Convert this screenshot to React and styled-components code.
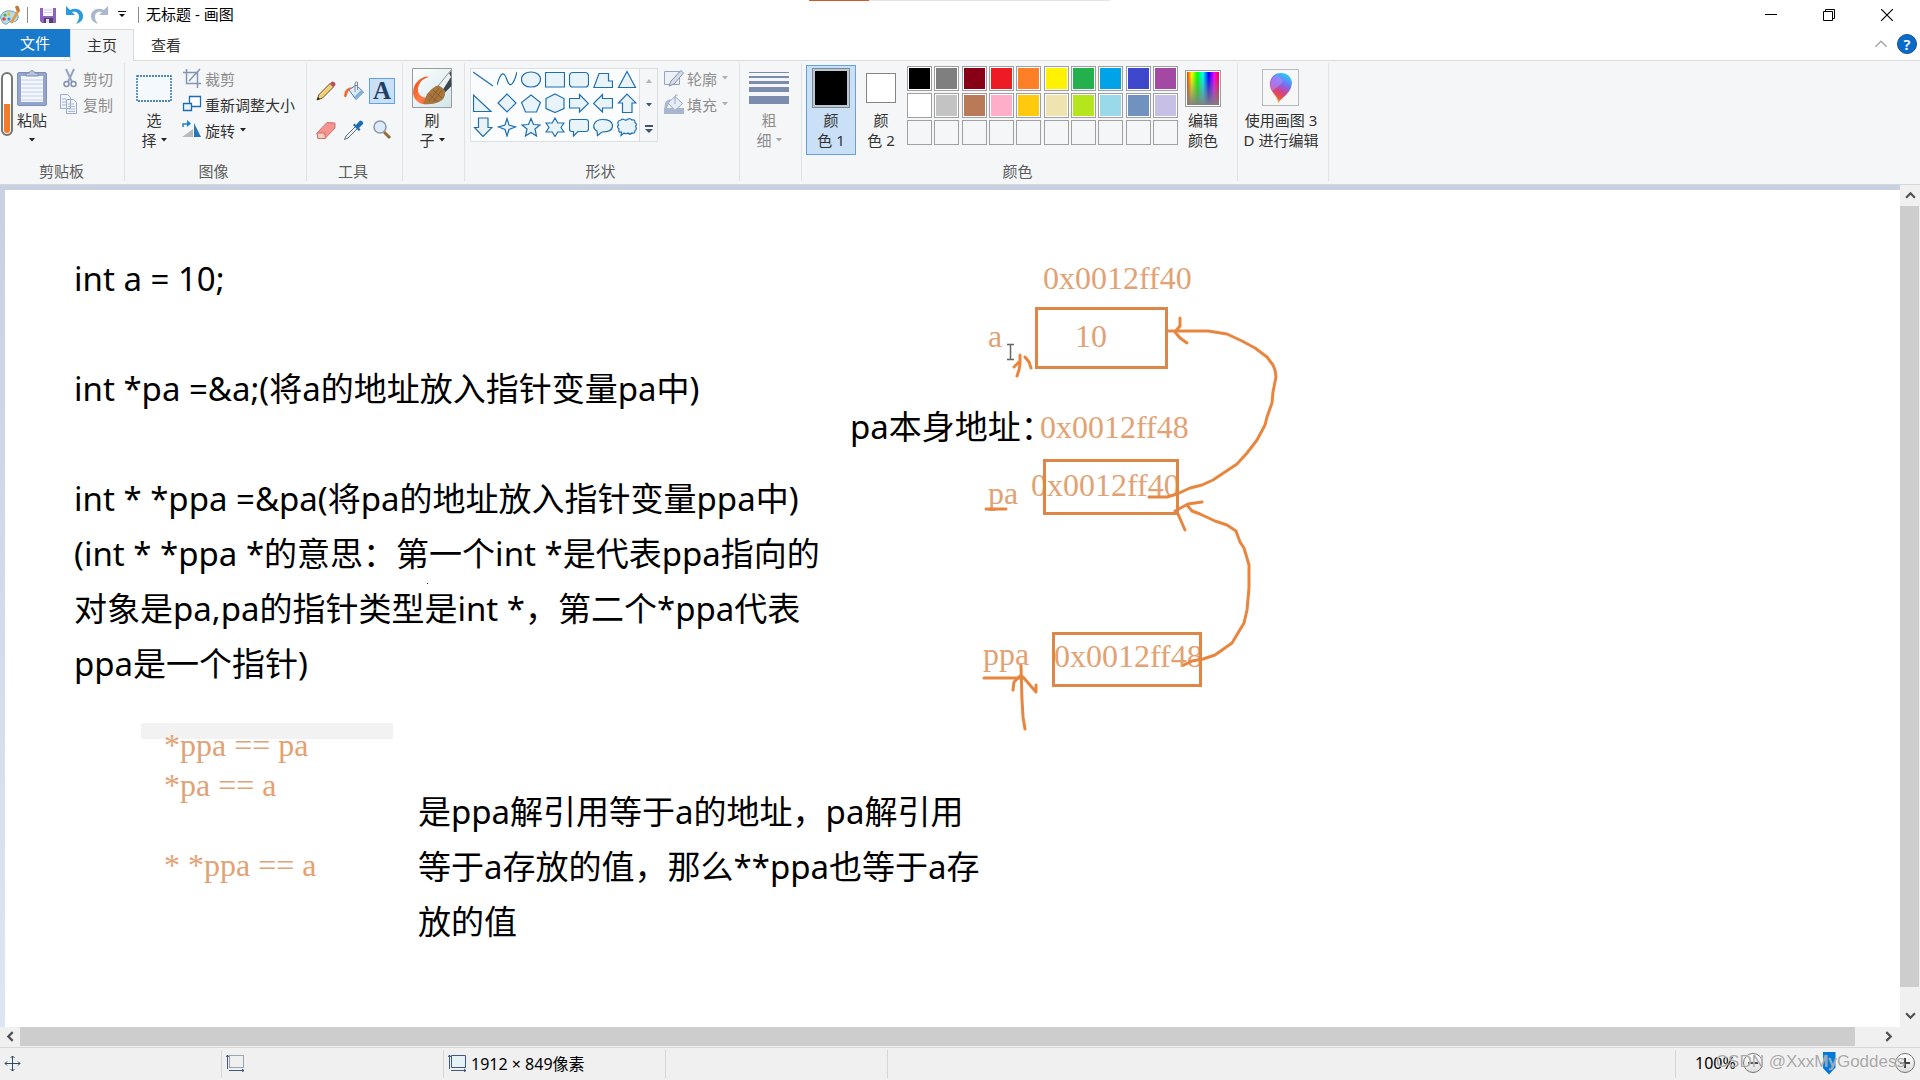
import React from "react";
import styled, { createGlobalStyle } from "styled-components";

const GlobalStyle = createGlobalStyle`
  * {
    box-sizing: border-box;
  }
  body {
    margin: 0;
    overflow: hidden;
    background: #fff;
  }
  body, button, input {
    font-family: "Noto Sans", "Noto Sans CJK SC", sans-serif;
    font-size: 15px;
  }
  button {
    margin: 0;
    padding: 0;
    border: 0;
    background: none;
    color: inherit;
  }
  svg {
    display: block;
    flex: none;
  }
`;

const PALETTE = [
  "#000000", "#7f7f7f", "#880015", "#ed1c24", "#ff7f27", "#fff200", "#22b14c", "#00a2e8", "#3f48cc", "#a349a4",
  "#ffffff", "#c3c3c3", "#b97a57", "#ffaec9", "#ffc90e", "#efe4b0", "#b5e61d", "#99d9ea", "#7092be", "#c8bfe7",
  "", "", "", "", "", "", "", "", "", "",
];

const SHAPES = [
  ["直线", "M0 3 20 17"],
  ["曲线", "M0 16C4 2 7 2 10 11C13 20 17 15 20 3"],
  ["椭圆形", "M10 3C15.500 3 19.500 6 19.500 10.500S15.500 18 10 18 .5 15 .5 10.500 4.500 3 10 3z"],
  ["矩形", "M.5 3.500h19v14.500H.5z"],
  ["圆角矩形", "M4 3.500h12q3.500 0 3.500 3.500v7.500q0 3.500-3.500 3.500H4Q.5 18 .5 14.500V7Q.5 3.500 4 3.500z"],
  ["多边形", "M6 4.500h9.500v7.500h4v6.500H.8z"],
  ["三角形", "M10 2.500 18.500 18.500h-17z"],
  ["直角三角形", "M.5 2v16.500H18z"],
  ["菱形", "M10 1 19 10 10 19 1 10z"],
  ["五边形", "M10 2 19.500 9.500 15.500 19h-11L.5 9.500z"],
  ["六边形", "M10 1 19 5.500v10L10 19.500 1 15.500v-10z"],
  ["右箭头", "M.5 5.500h10V1.500L19.500 10.500l-9 8.500v-4H.5z"],
  ["左箭头", "M19.500 5.500h-10V1.500L.5 10.500l9 8.500v-4h10z"],
  ["向上箭头", "M5.500 19.500v-9.500H1.500L10 1l9 9h-4v9.500z"],
  ["向下箭头", "M5.500 1v9.500H1.500L10 19.500l9-9h-4V1z"],
  ["四角星形", "M10 1.500 12 8 18.500 10 12 12.500 10 19 8 12.500 1.500 10 8 8z"],
  ["五角星形", "M10 1.500 12.500 7.500 19 8 14 12 15.500 19 10 15.500 4.500 19 6 12 1 8 7.500 7.500z"],
  ["六角星形", "M10 1 12.800 6H19l-3 4.500 3 4.500h-6.200L10 19.500 7.200 15H1l3-4.500L1 6h6.200z"],
  ["圆角矩形标注", "M3 2.500h14q2.500 0 2.500 2.500v7q0 2.500-2.500 2.500H9L4.500 19V14.500H3Q.5 14.500.5 12V5Q.5 2.500 3 2.500z"],
  ["椭圆形标注", "M10 2.500C16 2.500 19.500 5 19.500 9S16 15 9 15L4.500 18.500 4 14C-1.500 11 0 2.500 10 2.500z"],
  ["云形标注", "M4 3Q5 1.500 7 2.500 9 4 11 2 13 1 15 3 18 2 18 5.500 20.500 7 18.500 9.500 20.500 12 18 13.500 18 17 15 16 13 18 11 16 9 17.500 7 16L4 18.500 4.500 15Q1 16 2 12-.5 10 1.500 8-.5 4 4 3z"],
];

const STROKES = [
  // pa -> a
  "M1149 497 1167 497 1177 494 1190 488 1202 485 1213 480 1228 470 1237 464 1247 453 1257 440 1265 425 1267 417 1272 403 1273 392 1276 377 1275 370 1273 365 1267 357 1255 348 1242 341 1227 334 1208 331 1168 331",
  "M1180 318 1180 326 1175 332 1180 338 1187 343",
  // ppa -> pa
  "M1184 665 1192 661 1203 659 1215 655 1232 643 1244 623 1247 610 1249 588 1249 565 1244 548 1240 542 1236 531 1227 525 1215 521 1200 514 1192 511 1187 505",
  "M1202 502 1188 504 1175 511 1178 514 1185 530",
  "M1020 355 1020 364 1019 370 1017 376M1014 367 1019 362M1025 357 1029 362 1031 368",
  "M986 509 1006 509M984 678 1022 678",
  "M1021 666 1022 700 1023 717 1025 729",
  "M1013 690 1014 682 1020 676 1023 677 1036 692 1036 685",
];

const NOTE_A = [
  "int a = 10;",
  "",
  "int *pa =&a;(将a的地址放入指针变量pa中)",
  "",
  "int * *ppa =&pa(将pa的地址放入指针变量ppa中)",
  "(int * *ppa *的意思：第一个int *是代表ppa指向的",
  "对象是pa,pa的指针类型是int *，第二个*ppa代表",
  "ppa是一个指针)",
].join("\n");

const NOTE_B = "是ppa解引用等于a的地址，pa解引用\n等于a存放的值，那么**ppa也等于a存\n放的值";

const Caret = ({ color = "#222" }) => (
  <svg width="6" height="4">
    <path d="M0 0h6L3 3.500z" fill={color} />
  </svg>
);

const Icon = ({ size = 20, children }) => (
  <svg width={size} height={size} viewBox="0 0 20 20" fill="none">
    {children}
  </svg>
);

const PaintIcon = () => (
  <Icon>
    <path d="M1 14C-1 9 5 5 11 6s9 5 6 9-7 0-9 3-6 0-7-4z" fill="#b9dcea" stroke="#6f9db3" />
    <circle cx="4" cy="14" r="1.800" fill="#dc4a39" />
    <circle cx="5" cy="10" r="1.600" fill="#56ad47" />
    <circle cx="9" cy="9" r="1.600" fill="#f0b429" />
    <circle cx="9" cy="14" r="1.500" fill="#4687cf" />
    <path d="M19 5 11 18" stroke="#e39a3b" strokeWidth="2.500" />
    <path d="M15 2q2-3 4 0l1 4-3 1z" fill="#b97a43" />
  </Icon>
);

const SaveIcon = () => (
  <Icon>
    <path d="M2 3h16v15H4l-2-2z" fill="#8b62bd" />
    <path d="M5 3h10v8H5z" fill="#f6f5fa" />
    <path d="M6 5h8M6 7.500h8" stroke="#d2d2e2" />
    <path d="M6 13h9v5H6z" fill="#52416d" />
    <path d="M8 14h3v4H8z" fill="#e5e0ee" />
  </Icon>
);

const UndoIcon = ({ color, flip }) => (
  <Icon>
    <g transform={flip ? "translate(20 0) scale(-1 1)" : undefined} fill={color}>
      <path d="M2 1v9h9L8 7c4-1 7 1 7 5 0 2-1 4-3 7 5-2 7-4 7-8 0-6-7-9-13-6z" />
    </g>
  </Icon>
);

const PasteIcon = () => (
  <svg width="32" height="38" viewBox="0 0 32 38">
    <rect x="1.500" y="3.500" width="29" height="33" rx="1.500" fill="#93a5cb" stroke="#7e90b8" />
    <path d="M5 7h22v26H5z" fill="#f3f7fd" />
    <path d="M5 11h22M5 15h22M5 19h22M5 23h22M5 27h22M5 31h22" stroke="#c3d0e7" />
    <path d="M10 7V4h3q3-5 6 0h3v3z" fill="#b8c3d8" stroke="#7e90b8" />
  </svg>
);

const CutIcon = () => (
  <Icon>
    <path d="M6 1l6 13M14 1 8 14" stroke="#97a5bf" strokeWidth="2" />
    <circle cx="6.500" cy="16" r="2.500" stroke="#8191b0" strokeWidth="1.500" />
    <circle cx="13.500" cy="16" r="2.500" stroke="#8191b0" strokeWidth="1.500" />
  </Icon>
);

const CopyIcon = () => (
  <Icon>
    <path d="M.5.500h7l3 3v11H.5zM6.500 5.500h7l3 3v11h-10z" fill="#f2f6fc" stroke="#9babc9" />
    <path d="M2 5h4M2 8h4M2 11h4M8 10h6M8 12.500h7M8 15h7M8 17.500h7" stroke="#a9b8d3" />
  </Icon>
);

const CropIcon = () => (
  <Icon>
    <path d="M1 4.500h14.500V20M4.500 1v14.500H19M7 13 18 1" stroke="#8394b5" strokeWidth="1.500" />
  </Icon>
);

const ResizeIcon = () => (
  <Icon>
    <path d="M7.500 2.500h11v10h-11z" fill="#fff" stroke="#1c6cb0" strokeWidth="1.300" />
    <path d="M1.500 9.500h8v7h-8z" fill="#e6f2fb" stroke="#1c6cb0" strokeWidth="1.300" />
  </Icon>
);

const RotateIcon = () => (
  <Icon>
    <path d="M0 17h11V9z" fill="#b6b9bd" />
    <path d="M12 3v14h7z" fill="#2478b8" />
    <path d="M1 7V4h5" stroke="#1583d8" strokeWidth="1.500" />
    <path d="M5 0l4 3.500L5 7z" fill="#1583d8" />
  </Icon>
);

const SelectIcon = () => (
  <svg width="36" height="27">
    <rect x="1" y="1" width="34" height="25" fill="#f4f9fe" stroke="#1863a5" strokeWidth="1.300" strokeDasharray="2 1" />
  </svg>
);

const PencilIcon = () => (
  <Icon>
    <path d="M1 19 3 13.500 14 2.500l3.500 3.500L6.500 17z" fill="#f3cf75" stroke="#63543a" />
    <path d="M14 2.500 16 .5q3.500 0 3.500 3.500L17.500 6z" fill="#b94c5c" />
    <path d="M1 19l1-3 2 2z" fill="#222" />
  </Icon>
);

const BucketIcon = ({ muted }) =>
  muted ? (
    <Icon>
      <path d="M0 14h20v6H0z" fill="#a9b6d0" />
      <path d="M4 9 11 2.500l7.500 7L11 16.500z" fill="#e6ebf4" stroke="#9aa8c4" />
      <path d="M11 10V3q0-3 2.500-2" stroke="#9aa8c4" />
      <path d="M7 5Q0 6 .5 14q2 2 3-1 1-4 3.500-8z" fill="#a9b6d0" />
    </Icon>
  ) : (
    <Icon>
      <path d="M5 9 12 4l7.500 7L12 18.500z" fill="#dcecf9" stroke="#4c7fae" />
      <path d="M12 18.500 19.500 11 17 9l-7 7z" fill="#7fb2dc" />
      <path d="M11 11V3q0-3 2.500-2V9" stroke="#8a8f98" />
      <path d="M8 6Q0 7 0 15q2 3 3-1 1-5 5-8z" fill="#f06a30" />
    </Icon>
  );

const EraserIcon = () => (
  <Icon>
    <path d="M1 13 11 2.500l8 .5v5L9 18.500H2z" fill="#f5938f" stroke="#d0706f" strokeLinejoin="round" />
    <path d="M1 13h7.500l1 5.500H2z" fill="#fbcdbf" stroke="#d0706f" />
  </Icon>
);

const PickerIcon = () => (
  <Icon>
    <path d="M11 7 2 16l-1.500 3.500L4 18l9-9" fill="#e6f1f9" stroke="#62727f" />
    <path d="M9 5l6 6 1.500-1.500L15 8l4-4q1-3-3-3.500L12 5l-1.500-1.500z" fill="#1e6cb2" />
  </Icon>
);

const ZoomIcon = () => (
  <Icon>
    <path d="M12 12l6 6" stroke="#95693c" strokeWidth="3" />
    <circle cx="8" cy="7" r="6" fill="#dcebfa" stroke="#8e98a6" strokeWidth="1.500" />
  </Icon>
);

const BrushIcon = () => (
  <svg width="40" height="40" viewBox="0 0 40 40">
    <defs>
      <linearGradient id="brushBack" x2="1" y2="1">
        <stop stopColor="#fff" />
        <stop offset="1" stopColor="#cfe6ea" />
      </linearGradient>
      <linearGradient id="brushPaint" y2="1">
        <stop stopColor="#e8501c" />
        <stop offset=".6" stopColor="#ff7d47" />
        <stop offset="1" stopColor="#d93f10" />
      </linearGradient>
    </defs>
    <path d="M.5.500h39v39H.5z" fill="url(#brushBack)" stroke="#9b9b9b" />
    <path d="M27 18 39 3l.5 15-8 8z" fill="#3c4650" />
    <path d="M26 18 37 5l2 4-9 14z" fill="#eef1f3" />
    <path d="M26 18 39 2" stroke="#8e979e" />
    <path d="M17 9Q13 7 7 12 1 17 1 25q1 9 10 11 6 1 11-3l-8-3Q5 28 6 20q2-9 11-11z" fill="url(#brushPaint)" />
    <path d="M12 36q1-12 12-18 5-1 9 5 1 8-6 11-7 3-15 2z" fill="#a9763f" />
    <path d="M17 33l10-13M21 34l9-12M17 26l9 8M21 22l9 8" stroke="#7f5426" strokeWidth=".7" />
  </svg>
);

const OutlineIcon = () => (
  <Icon>
    <path d="M.5 3.500h15v13H.5z" fill="#eef1f6" stroke="#98a5bf" />
    <path d="M5 18 7 13 17 2.500l2.500 2.500L10 16z" fill="#d6dde9" stroke="#8292b0" />
  </Icon>
);

const WeightIcon = () => (
  <svg width="40" height="36" fill="#7b8dae">
    <path d="M0 2h40v1H0zM0 6h40v2H0zM0 11h40v3H0zM0 17h40v5H0zM0 26h40v8H0z" />
  </svg>
);

const Paint3DIcon = () => (
  <svg width="38" height="38">
    <defs>
      <linearGradient id="drop" x1=".7" y1="0" x2=".3" y2="1">
        <stop stopColor="#1fd3f5" />
        <stop offset=".35" stopColor="#7a6cf0" />
        <stop offset=".6" stopColor="#d43f8e" />
        <stop offset=".8" stopColor="#e8523f" />
        <stop offset="1" stopColor="#ffc312" />
      </linearGradient>
    </defs>
    <path d="M.5.500h36v36H.5z" fill="#f7f7f7" stroke="#b9b9b9" />
    <path d="M16 34q0-5-4-9-5-6-4-12Q10 4 19 4t11 9q0 7-6 13-5 4-8 8z" fill="url(#drop)" />
    <path d="M9 12q4-8 9-4t0 8-8 6q-3-5-1-10z" fill="#b08cff" opacity=".6" />
  </svg>
);

const Chevron = ({ turn = 0, size = 11, color = "#505050", width = 2 }) => (
  <svg width={size} height={size} viewBox="0 0 10 10" fill="none">
    <path d="M1 7l4-4 4 4" stroke={color} strokeWidth={width} transform={`rotate(${turn} 5 5)`} />
  </svg>
);

const BigCommand = ({ icon, lines, caret, muted, ...rest }) => (
  <BigButton $muted={muted} {...rest}>
    <IconSlot>{icon}</IconSlot>
    {lines.map((line, i) => (
      <BigLine key={line}>
        {line}
        {caret && i === lines.length - 1 && <Caret color={muted ? "#a8a8a8" : "#222"} />}
      </BigLine>
    ))}
  </BigButton>
);

const SmallCommand = ({ icon, text, caret, muted }) => (
  <SmallButton $muted={muted}>
    {icon}
    {text}
    {caret && (
      <SmallCaret>
        <Caret color={muted ? "#b0b0b0" : "#222"} />
      </SmallCaret>
    )}
  </SmallButton>
);

const Ribbon = () => (
  <Ribbon_>
    <Group $width={125} $pad={7}>
      <Tools $gap={3}>
        <BigButton>
          <IconSlot><PasteIcon /></IconSlot>
          <BigLine>粘贴</BigLine>
          <BigLine><Caret /></BigLine>
        </BigButton>
        <Stack>
          <SmallCommand icon={<CutIcon />} text="剪切" muted />
          <SmallCommand icon={<CopyIcon />} text="复制" muted />
        </Stack>
      </Tools>
      <GroupName>剪贴板</GroupName>
    </Group>
    <Group $width={182} $pad={4}>
      <Tools $gap={3}>
        <BigCommand icon={<SelectIcon />} lines={["选", "择"]} caret />
        <Stack>
          <SmallCommand icon={<CropIcon />} text="裁剪" muted />
          <SmallCommand icon={<ResizeIcon />} text="重新调整大小" />
          <SmallCommand icon={<RotateIcon />} text="旋转" caret />
        </Stack>
      </Tools>
      <GroupName>图像</GroupName>
    </Group>
    <Group $width={96} $pad={5}>
      <ToolGrid>
        <ToolButton aria-label="铅笔"><PencilIcon /></ToolButton>
        <ToolButton aria-label="用颜色填充"><BucketIcon /></ToolButton>
        <ToolButton $active>A</ToolButton>
        <ToolButton aria-label="橡皮擦"><EraserIcon /></ToolButton>
        <ToolButton aria-label="颜色选取器"><PickerIcon /></ToolButton>
        <ToolButton aria-label="放大镜"><ZoomIcon /></ToolButton>
      </ToolGrid>
      <GroupName>工具</GroupName>
    </Group>
    <Group $width={62} $pad={4}>
      <Tools>
        <BigCommand icon={<BrushIcon />} lines={["刷", "子"]} caret />
      </Tools>
    </Group>
    <Group $width={275} $pad={5}>
      <Tools $gap={6}>
        <Gallery>
          <ShapeGrid>
            {SHAPES.map(([name, d]) => (
              <ShapeButton key={name} aria-label={name}>
                <svg width="20" height="20" fill="#e9f4fa" stroke="#1f6fb0" strokeWidth="1.200">
                  <path d={d} fill={name.endsWith("线") ? "none" : undefined} />
                </svg>
              </ShapeButton>
            ))}
          </ShapeGrid>
          <GalleryScroll>
            <button aria-label="上一行">
              <svg width="6" height="4"><path d="M3 0l3 4H0z" fill="#b0b4bb" /></svg>
            </button>
            <button aria-label="下一行"><Caret color="#44546f" /></button>
            <button aria-label="更多形状">
              <svg width="8" height="8"><path d="M0 0h8v2H0zM0 4h8L4 8z" fill="#44546f" /></svg>
            </button>
          </GalleryScroll>
        </Gallery>
        <Stack>
          <SmallCommand icon={<OutlineIcon />} text="轮廓" caret muted />
          <SmallCommand icon={<BucketIcon muted />} text="填充" caret muted />
        </Stack>
      </Tools>
      <GroupName>形状</GroupName>
    </Group>
    <Group $width={62} $pad={4}>
      <Tools>
        <BigCommand icon={<WeightIcon />} lines={["粗", "细"]} caret muted />
      </Tools>
    </Group>
    <Group $width={436} $pad={4}>
      <Tools>
        <BigCommand icon={<Swatch $size={40} $color="#000" />} lines={["颜", "色 1"]} $active />
        <BigCommand icon={<Swatch $size={30} $color="#fff" />} lines={["颜", "色 2"]} />
        <Palette>
          {PALETTE.map((color, i) => (
            <PaletteCell key={i} $color={color} aria-label={color || "空"} />
          ))}
        </Palette>
        <BigCommand icon={<Rainbow />} lines={["编辑", "颜色"]} />
      </Tools>
      <GroupName>颜色</GroupName>
    </Group>
    <Group $width={91} $pad={4}>
      <Tools>
        <BigCommand icon={<Paint3DIcon />} lines={["使用画图 3", "D 进行编辑"]} $wide />
      </Tools>
    </Group>
    <Recorder />
  </Ribbon_>
);

const Canvas = () => (
  <Canvas_>
    <Note $x={74} $y={251}>{NOTE_A}</Note>
    <Note $x={850} $y={399}>pa本身地址：</Note>
    <Note $x={418} $y={784}>{NOTE_B}</Note>
    <GreyPatch />
    <Code $x={164} $y={725}>{"*ppa == pa\n*pa == a\n\n* *ppa == a"}</Code>
    <Code $x={1043} $y={258}>0x0012ff40</Code>
    <Code $x={988} $y={316}>a</Code>
    <Code $x={1075} $y={316}>10</Code>
    <Code $x={1040} $y={407}>0x0012ff48</Code>
    <Code $x={1031} $y={465}>0x0012ff40</Code>
    <Code $x={988} $y={473}>pa</Code>
    <Code $x={1054} $y={636}>0x0012ff48</Code>
    <Code $x={983} $y={634}>ppa</Code>
    <Drawing viewBox="5 190 1300 600" width="1300" height="600">
      <g fill="none" stroke="#e8863f" strokeWidth="3" strokeLinecap="round" strokeLinejoin="round">
        {STROKES.map((d) => (
          <path key={d} d={d} />
        ))}
      </g>
      <g fill="none" stroke="#de8645" strokeWidth="3">
        <rect x="1036.500" y="308.500" width="130" height="59" />
        <rect x="1044.500" y="460.500" width="133" height="53" />
        <rect x="1053.500" y="633.500" width="147" height="52" />
      </g>
      <path d="M1007 344.500h7M1007 359.500h7M1010.500 345v14" fill="none" stroke="#666" strokeWidth="1.500" />
      <path d="M427 583h1v1h-1z" fill="#222" />
    </Drawing>
  </Canvas_>
);

const App = () => (
  <Window>
    <GlobalStyle />
    <TopEdge />
    <TitleBar>
      <PaintIcon />
      <Divider />
      <QuickButton aria-label="保存"><SaveIcon /></QuickButton>
      <QuickButton aria-label="撤消"><UndoIcon color="#2a9be0" /></QuickButton>
      <QuickButton aria-label="重做"><UndoIcon color="#a9b7cf" flip /></QuickButton>
      <QuickButton $narrow aria-label="自定义快速访问工具栏">
        <svg width="8" height="7"><path d="M0 0h8v1H0zM1 3h6L4 6z" fill="#111" /></svg>
      </QuickButton>
      <Divider />
      <Title>无标题 - 画图</Title>
      <WindowButton aria-label="最小化">
        <svg width="12" height="12"><path d="M0 5.500h12" stroke="#000" /></svg>
      </WindowButton>
      <WindowButton aria-label="向下还原">
        <svg width="12" height="12" fill="none" stroke="#000">
          <path d="M.5 2.500h9v9h-9zM2.500 2V.5h9v9H10" />
        </svg>
      </WindowButton>
      <WindowButton aria-label="关闭">
        <svg width="12" height="12"><path d="M0 0l12 12M12 0 0 12" stroke="#000" strokeWidth="1.200" /></svg>
      </WindowButton>
    </TitleBar>
    <Tabs>
      <FileTab>文件</FileTab>
      <Tab $active>主页</Tab>
      <Tab>查看</Tab>
      <TabTools>
        <button aria-label="最小化功能区"><Chevron size={14} color="#a5a5a5" width={1} /></button>
        <HelpButton>?</HelpButton>
      </TabTools>
    </Tabs>
    <Ribbon />
    <Workspace>
      <Canvas />
      <ScrollBar $vertical>
        <button aria-label="向上滚动"><Chevron /></button>
        <ScrollThumb $vertical />
        <button aria-label="向下滚动"><Chevron turn={180} /></button>
      </ScrollBar>
      <ScrollBar>
        <button aria-label="向左滚动"><Chevron turn={270} /></button>
        <ScrollThumb />
        <button aria-label="向右滚动"><Chevron turn={90} /></button>
      </ScrollBar>
      <ScrollCorner />
    </Workspace>
    <StatusBar>
      <StatusCell>
        <svg width="17" height="17" fill="none" stroke="#2d4a6e">
          <path d="M8.500 1v15M1 8.500h15M6.500 3l2-2 2 2M6.500 14l2 2 2-2M3 6.500l-2 2 2 2M14 6.500l2 2-2 2" />
        </svg>
      </StatusCell>
      <StatusCell>
        <svg width="19" height="18" fill="none" stroke="#44597a">
          <path d="M3.500 1.500h14v12h-14z" strokeDasharray="1 1" />
          <path d="M1.500 1v14M3 16.500h15M0 3l1.500-2L3 3M16 15l2 1.500-2 1.500" />
        </svg>
      </StatusCell>
      <StatusCell>
        <svg width="19" height="18" fill="none" stroke="#44597a">
          <path d="M3.500 1.500h14v12h-14z" fill="#e5f3f7" />
          <path d="M1.500 1v14M3 16.500h15M0 3l1.500-2L3 3M16 15l2 1.500-2 1.500" />
        </svg>
        1912 × 849像素
      </StatusCell>
      <StatusCell />
      <StatusFill />
      <ZoomPanel>
        <ZoomValue htmlFor="zoom">100%</ZoomValue>
        <RoundButton aria-label="缩小">
          <svg width="10" height="10"><path d="M0 5h10" stroke="#444" strokeWidth="2" /></svg>
        </RoundButton>
        <ZoomSlider id="zoom" type="range" min="0" max="100" defaultValue="50" />
        <RoundButton aria-label="放大">
          <svg width="10" height="10"><path d="M0 5h10M5 0v10" stroke="#444" strokeWidth="2" /></svg>
        </RoundButton>
        <Watermark>CSDN @XxxMyGoddess</Watermark>
      </ZoomPanel>
    </StatusBar>
  </Window>
);

const Window = styled.div`
  position: relative;
  display: flex;
  flex-direction: column;
  height: 100vh;
  color: #222;
`;

/* sliver of another window peeking in at the top edge */
const TopEdge = styled.div`
  position: absolute;
  top: 0;
  left: 809px;
  width: 301px;
  height: 1px;
  background: linear-gradient(90deg, #cf5a2b 60px, #e4e4e4 60px);
`;

const TitleBar = styled.header`
  display: flex;
  align-items: center;
  height: 29px;
  padding-right: 4px;
`;

const Divider = styled.span`
  width: 1px;
  height: 16px;
  margin: 0 7px;
  background: #8c8c8c;
`;

const QuickButton = styled.button`
  display: flex;
  align-items: center;
  justify-content: center;
  width: ${(p) => (p.$narrow ? 18 : 26)}px;
  height: 24px;
`;

const Title = styled.span`
  flex: 1;
  padding-bottom: 2px;
  color: #000;
`;

const WindowButton = styled(QuickButton)`
  width: 58px;
`;

const Tabs = styled.nav`
  display: flex;
  align-items: flex-start;
  height: 32px;
  box-shadow: inset 0 -1px #d9dadc;
`;

const Tab = styled.button`
  width: 64px;
  height: 32px;
  padding-bottom: 3px;
  border: 1px solid ${(p) => (p.$active ? "#d9dadc" : "transparent")};
  border-bottom: 0;
  background: ${(p) => (p.$active ? "#f5f6f7" : "none")};
  color: #333;
`;

const FileTab = styled(Tab)`
  width: 70px;
  height: 28px;
  padding-bottom: 1px;
  border: 0;
  background: #1979ca;
  color: #fff;
`;

const TabTools = styled.div`
  display: flex;
  align-items: center;
  gap: 9px;
  height: 30px;
  margin-left: auto;
  padding-right: 3px;
`;

const HelpButton = styled.button`
  width: 20px;
  height: 20px;
  border: 1px solid #184f8a;
  border-radius: 50%;
  background: #0a6bcb;
  color: #fff;
  font-weight: 600;
  line-height: 18px;
`;

const Ribbon_ = styled.section`
  position: relative;
  display: flex;
  height: 124px;
  padding: 2px 0 3px;
  border-bottom: 1px solid #d5d7da;
  background: #f5f6f7;
`;

const Group = styled.div`
  display: flex;
  flex-direction: column;
  justify-content: space-between;
  width: ${(p) => p.$width}px;
  padding-top: 2px;
  padding-left: ${(p) => p.$pad}px;
  border-right: 1px solid #e0e2e4;
`;

const GroupName = styled.div`
  padding-right: 8px;
  color: #5c5c5c;
  line-height: 20px;
  text-align: center;
`;

const Tools = styled.div`
  display: flex;
  gap: ${(p) => p.$gap || 0}px;
`;

const BigButton = styled.button`
  display: flex;
  flex-direction: column;
  width: ${(p) => (p.$wide ? 78 : 50)}px;
  height: 90px;
  border: 1px solid ${(p) => (p.$active ? "#62a2e4" : "transparent")};
  background: ${(p) => (p.$active ? "#c9e0f7" : "none")};
  color: ${(p) => (p.$muted ? "#8d8d8d" : "#333")};
`;

const IconSlot = styled.span`
  display: flex;
  align-items: center;
  justify-content: center;
  width: 100%;
  height: 44px;
`;

const BigLine = styled.span`
  display: flex;
  align-items: center;
  justify-content: center;
  gap: 4px;
  width: 100%;
  height: 20px;
  line-height: 20px;
  white-space: nowrap;
`;

const Stack = styled.div`
  display: flex;
  flex-direction: column;
`;

const SmallButton = styled.button`
  display: flex;
  align-items: center;
  gap: 3px;
  height: 26px;
  color: ${(p) => (p.$muted ? "#8d8d8d" : "#333")};
  white-space: nowrap;
`;

const SmallCaret = styled.span`
  padding-left: 2px;
`;

const ToolGrid = styled.div`
  display: grid;
  grid-template-columns: repeat(3, 28px);
  grid-auto-rows: 39px;
  place-items: center;
  padding-top: 6px;
`;

const ToolButton = styled.button`
  display: flex;
  align-items: center;
  justify-content: center;
  width: 26px;
  height: 26px;
  border: 1px solid ${(p) => (p.$active ? "#62a2e4" : "transparent")};
  background: ${(p) => (p.$active ? "#c9e0f7" : "none")};
  color: #1f3f66;
  font-family: "Liberation Serif", serif;
  font-size: 25px;
  font-weight: 700;
  line-height: 24px;
`;

const Gallery = styled.div`
  display: flex;
  width: 188px;
  height: 74px;
  margin-top: 3px;
  border: 1px solid #dcdfe2;
  background: #fbfcfd;
`;

const ShapeGrid = styled.div`
  display: grid;
  flex: 1;
  grid-template-columns: repeat(7, 24px);
  grid-auto-rows: 24px;
`;

const ShapeButton = styled.button`
  display: grid;
  place-items: start center;
`;

const GalleryScroll = styled.div`
  display: grid;
  grid-template-rows: repeat(3, 24px);
  width: 18px;
  border-left: 1px solid #dcdfe2;
  background: #f5f6f7;

  button {
    display: grid;
    place-items: center;
  }
`;

const Swatch = styled.span`
  width: ${(p) => (p.$size === 40 ? 38 : p.$size)}px;
  height: ${(p) => p.$size}px;
  border: 1px solid #858585;
  background: ${(p) => p.$color};
  box-shadow: inset 0 0 0 2px ${(p) => (p.$size === 40 ? "#b5c8dc" : "#fff")};
`;

const Palette = styled.div`
  display: grid;
  grid-template-columns: repeat(10, 25px);
  grid-auto-rows: 25px;
  justify-content: space-between;
  align-content: start;
  row-gap: 2px;
  width: 271px;
  margin: 1px 0 0 1px;
`;

const PaletteCell = styled.button`
  border: 1px solid #a0a0a0;
  background: ${(p) => p.$color || "#f5f6f7"};
  box-shadow: inset 0 0 0 1px ${(p) => (p.$color ? "#fff" : "transparent")};
`;

const Rainbow = styled.span`
  width: 36px;
  height: 37px;
  border: 1px solid #9d9d9d;
  background:
    linear-gradient(transparent 10%, #808080),
    linear-gradient(90deg, red, #ff0, lime, cyan, blue, magenta, red);
  box-shadow: inset 0 0 0 1px #fff;
`;

/* floating level meter of the screen recorder */
const Recorder = styled.div`
  position: absolute;
  top: 11px;
  left: 1px;
  width: 12px;
  height: 64px;
  border: 2px solid #777;
  border-radius: 6px;
  background: linear-gradient(#fff 30px, #f47a2c 30px);
  box-shadow: inset 0 0 0 1px #fff;
`;

const Workspace = styled.main`
  display: grid;
  flex: 1;
  grid-template-columns: minmax(0, 1fr) 20px;
  grid-template-rows: minmax(0, 1fr) 20px;
  min-height: 0;
  background: linear-gradient(#c8d1e2, #dce6f4);
`;

const Canvas_ = styled.div`
  position: relative;
  margin: 5px 0 0 5px;
  overflow: hidden;
  background: #fff;
`;

const Note = styled.div`
  position: absolute;
  left: ${(p) => p.$x - 5}px;
  top: ${(p) => p.$y - 190}px;
  color: #000;
  font-family: "Noto Sans", "Noto Sans CJK SC", sans-serif;
  font-size: 33px;
  line-height: 55px;
  white-space: pre;
`;

const Code = styled(Note)`
  color: #e2a273;
  font-family: "Liberation Serif", serif;
  font-size: 32px;
  line-height: 40px;
`;

const GreyPatch = styled.div`
  position: absolute;
  left: 136px;
  top: 533px;
  width: 252px;
  height: 16px;
  background: #f2f2f2;
`;

const Drawing = styled.svg`
  position: absolute;
  top: 0;
  left: 0;
`;

const ScrollBar = styled.div`
  display: flex;
  flex-direction: ${(p) => (p.$vertical ? "column" : "row")};
  justify-content: space-between;
  padding: ${(p) => (p.$vertical ? "0 1px 1px 0" : "0 2px 1px 0")};
  background: #f0f0f0;

  button {
    display: grid;
    place-items: center;
    flex: none;
    width: 20px;
    height: ${(p) => (p.$vertical ? 21 : 19)}px;
  }
`;

const ScrollThumb = styled.div`
  flex: 1;
  margin: ${(p) => (p.$vertical ? "0 0 18px" : "0 23px 0 0")};
  background: #cdcdcd;
`;

const ScrollCorner = styled.div`
  background: #f0f0f0;
`;

const StatusBar = styled.footer`
  display: flex;
  height: 33px;
  padding: 2px 0;
  border-top: 1px solid #d7d7d7;
  background: #f0f0f0;
  color: #000;
  font-size: 16px;
`;

const StatusCell = styled.div`
  display: flex;
  align-items: center;
  gap: 4px;
  width: 222px;
  padding: 0 0 2px 4px;
  border-right: 1px solid #d7d7d7;
`;

const StatusFill = styled.div`
  flex: 1;
`;

const ZoomPanel = styled.div`
  position: relative;
  display: flex;
  align-items: center;
  width: 245px;
  padding: 0 5px 2px 19px;
  border-left: 1px solid #d7d7d7;
`;

const ZoomValue = styled.label`
  width: 48px;
`;

const RoundButton = styled.button`
  display: grid;
  place-items: center;
  flex: none;
  width: 20px;
  height: 20px;
  border: 1px solid #777;
  border-radius: 50%;
  background: linear-gradient(#fff, #ddd);
`;

const ZoomSlider = styled.input`
  appearance: none;
  flex: 1;
  min-width: 0;
  height: 24px;
  margin: 0;
  background: none;

  &::-webkit-slider-thumb {
    appearance: none;
    width: 13px;
    height: 23px;
    background: #0078d7;
    clip-path: polygon(0 0, 100% 0, 100% 70%, 50% 100%, 0 70%);
  }
`;

const Watermark = styled.span`
  position: absolute;
  right: 15px;
  top: 0;
  color: rgba(150, 150, 150, 0.85);
  font-family: "Liberation Sans", sans-serif;
  font-size: 17px;
  line-height: 24px;
  text-shadow: 0 0 1px #fff;
  pointer-events: none;
`;

export default App;
